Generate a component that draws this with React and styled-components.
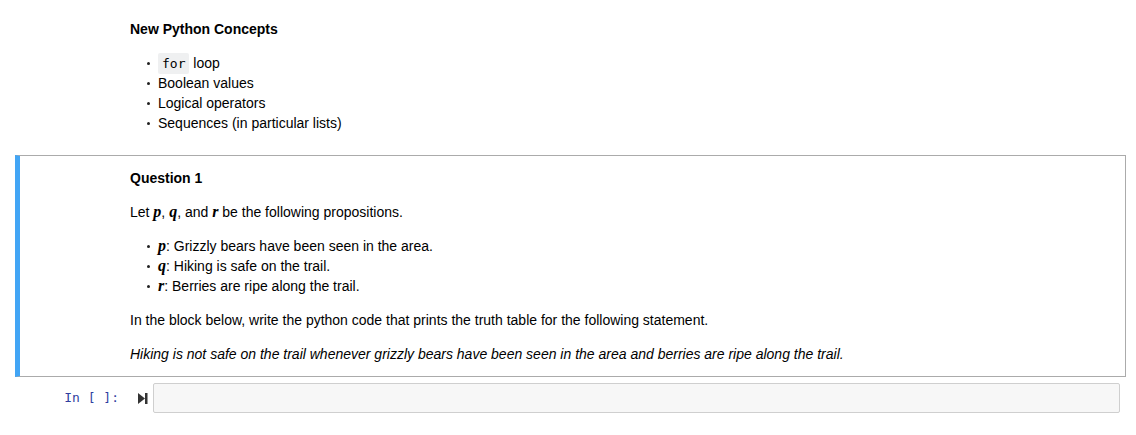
import React from 'react';
import styled, { createGlobalStyle } from 'styled-components';

const GlobalStyle = createGlobalStyle`
  html, body {
    margin: 0;
    padding: 0;
    background: #fff;
  }
  body {
    font-family: "Liberation Sans", Arial, sans-serif;
    font-size: 14px;
    line-height: 20px;
    color: #000;
  }
`;

const Notebook = styled('div')`
  width: 1111px;
  padding: 6px 0 0 15px;
  display: flex;
  flex-direction: column;
`;

const Cell = styled('div')`
  display: flex;
  align-items: flex-start;
  border: 1px solid ${props => (props.selected ? '#ababab' : 'transparent')};
  border-left: 5px solid ${props => (props.selected ? '#42a5f5' : 'transparent')};
  padding: 5px 5px 5px 0;
  margin-bottom: ${props => props.gap || 0}px;
`;

const Prompt = styled('div')`
  flex: 0 0 103px;
  box-sizing: border-box;
`;

const Rendered = styled('div')`
  flex: 1;
  padding: 7px;
  min-width: 0;

  & > *:first-child {
    margin-top: 0;
  }
  & > *:last-child {
    margin-bottom: 0;
  }
`;

const Heading = styled('h4')`
  font-size: 14px;
  line-height: 20px;
  font-weight: bold;
  margin: 0 0 14px;
`;

const Para = styled('p')`
  margin: 0 0 14px;
  font-style: ${props => (props.italic ? 'italic' : 'normal')};
`;

const List = styled('ul')`
  margin: 0 0 14px;
  padding-left: 28px;
  list-style: none;
`;

const Item = styled('li')`
  position: relative;
  height: 20px;
  &::before {
    content: '';
    position: absolute;
    left: -11px;
    top: 9px;
    width: 3px;
    height: 3px;
    border-radius: 50%;
    background: #222;
  }
`;

const Code = styled('code')`
  font-family: "DejaVu Sans Mono", "Liberation Mono", monospace;
  font-size: 13px;
  line-height: 1;
  background: #eff0f1;
  padding: 3px 4px;
  border-radius: 2px;
`;

const Var = styled('span')`
  font-family: "Liberation Serif", "Times New Roman", serif;
  font-style: italic;
  font-weight: bold;
  font-size: 16px;
  line-height: 1;
`;

const CodePrompt = styled('div')`
  flex: 0 0 103px;
  box-sizing: border-box;
  height: 30px;
  display: flex;
  align-items: center;
  justify-content: flex-end;
  padding-right: 4px;
  font-family: "DejaVu Sans Mono", "Liberation Mono", monospace;
  font-size: 13px;
  color: #303f9f;
  white-space: pre;
`;

const RunButton = styled('div')`
  flex: 0 0 30px;
  height: 30px;
  display: flex;
  align-items: center;
  justify-content: center;
  padding-left: 9px;
  box-sizing: border-box;
`;

const InputArea = styled('div')`
  flex: 1;
  height: 30px;
  box-sizing: border-box;
  background: #f7f7f7;
  border: 1px solid #cfcfcf;
  border-radius: 2px;
`;

const StepIcon = () => (
  <svg width="10" height="11" viewBox="0 0 10 11">
    <path d="M0 0 L7 5.5 L0 11 Z" fill="#333" />
    <rect x="7" y="0" width="2.5" height="11" fill="#333" />
  </svg>
);

const App = () => (
  <>
    <GlobalStyle />
    <Notebook>
      <Cell gap={9}>
        <Prompt />
        <Rendered>
          <Heading>New Python Concepts</Heading>
          <List>
            <Item>
              <Code>for</Code> loop
            </Item>
            <Item>Boolean values</Item>
            <Item>Logical operators</Item>
            <Item>Sequences (in particular lists)</Item>
          </List>
        </Rendered>
      </Cell>

      <Cell selected>
        <Prompt />
        <Rendered>
          <Heading>Question 1</Heading>
          <Para>
            Let <Var>p</Var>, <Var>q</Var>, and <Var>r</Var> be the following propositions.
          </Para>
          <List>
            <Item>
              <Var>p</Var>: Grizzly bears have been seen in the area.
            </Item>
            <Item>
              <Var>q</Var>: Hiking is safe on the trail.
            </Item>
            <Item>
              <Var>r</Var>: Berries are ripe along the trail.
            </Item>
          </List>
          <Para>
            In the block below, write the python code that prints the truth table for the following statement.
          </Para>
          <Para italic>
            Hiking is not safe on the trail whenever grizzly bears have been seen in the area and berries are ripe along the trail.
          </Para>
        </Rendered>
      </Cell>

      <Cell>
        <CodePrompt>In [ ]:</CodePrompt>
        <RunButton>
          <StepIcon />
        </RunButton>
        <InputArea />
      </Cell>
    </Notebook>
  </>
);

export default App;
